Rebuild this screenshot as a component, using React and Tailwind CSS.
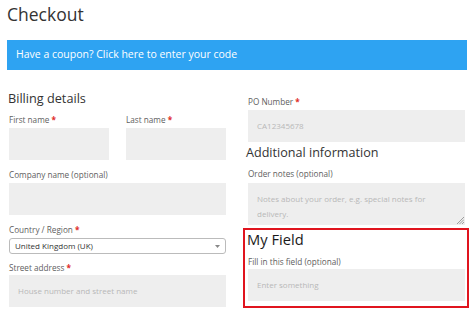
import React from "react";

const Req = () => <span className="text-[#e02b27] font-bold"> *</span>;

function Label({ children, className = "" }) {
  return (
    <div className={`text-[8.2px] leading-[12px] text-[#5e5e5e] ${className}`}>{children}</div>
  );
}

function Input({ placeholder, className = "" }) {
  return (
    <div className={`h-[32px] bg-[#eeeeee] flex items-center px-[9px] text-[8px] text-[#b8b8b8] ${className}`}>
      {placeholder}
    </div>
  );
}

export default function App() {
  return (
    <div
      className="w-[474px] h-[315px] overflow-hidden bg-white"
      style={{ fontFamily: '"Open Sans", sans-serif' }}
    >
      <div className="px-[7px]">
        <h1 className="text-[17.5px] leading-[26px] text-[#333] pt-[1px] h-[40px]">Checkout</h1>
        <div className="h-[30px] w-[460px] bg-[#2ea3f2] text-white text-[10.5px] flex items-center pl-[9px]">
          Have a coupon? Click here to enter your code
        </div>
        <div className="grid grid-cols-[217px_217px] gap-x-[22px] pl-[2px]">
          {/* Left column */}
          <div className="flex flex-col">
            <h3 className="mt-[20px] -ml-[1px] text-[12.7px] leading-[16px] text-[#333]">Billing details</h3>
            <div className="mt-[8px] grid grid-cols-[100px_100px] gap-x-[17px]">
              <div>
                <Label>First name<Req /></Label>
                <Input className="mt-[2px]" />
              </div>
              <div>
                <Label>Last name<Req /></Label>
                <Input className="mt-[2px]" />
              </div>
            </div>
            <Label className="mt-[9px]">Company name (optional)</Label>
            <Input className="mt-[2px] h-[31px]" />
            <Label className="mt-[9px]">Country / Region<Req /></Label>
            <div className="mt-[2px] h-[16px] bg-white border border-[#bbbbbb] rounded-[3px] flex items-center justify-between pl-[5px] pr-[5px] text-[8px] text-[#333]">
              <span>United Kingdom (UK)</span>
              <svg width="5" height="3" viewBox="0 0 5 3"><path d="M0 0h5L2.5 3z" fill="#888" /></svg>
            </div>
            <Label className="mt-[8px]">Street address<Req /></Label>
            <Input className="mt-[1px]" placeholder="House number and street name" />
          </div>
          {/* Right column */}
          <div className="flex flex-col">
            <Label className="mt-[26px]">PO Number<Req /></Label>
            <Input className="mt-[2px] h-[31px]" placeholder="CA12345678" />
            <h3 className="mt-[3px] -ml-[2px] text-[12.6px] leading-[16px] text-[#333]">Additional information</h3>
            <Label className="mt-[7px]">Order notes (optional)</Label>
            <div className="relative mt-[3px] h-[42px] bg-[#eeeeee] px-[9px] pt-[8px] text-[8px] leading-[15px] text-[#b8b8b8]">
              <div>Notes about your order, e.g. special notes for</div>
              <div>delivery.</div>
              <svg className="absolute right-[1px] bottom-[1px]" width="7" height="7" viewBox="0 0 7 7">
                <path d="M7 0L0 7M7 2.5L2.5 7M7 5L5 7" stroke="#888" strokeWidth="0.8" />
              </svg>
            </div>
            <div className="mt-[3px] -ml-[5px] -mr-[4px] border-2 border-[#e0141e] pl-[3px] pr-[2px] pb-[5px]">
              <h3 className="text-[14.7px] leading-[18px] text-[#1a1a1a] -ml-[1px]">My Field</h3>
              <Label className="mt-[8px] text-[#4a4a4a]">Fill in this field (optional)</Label>
              <Input className="mt-[1px]" placeholder="Enter something" />
            </div>
          </div>
        </div>
      </div>
    </div>
  );
}
